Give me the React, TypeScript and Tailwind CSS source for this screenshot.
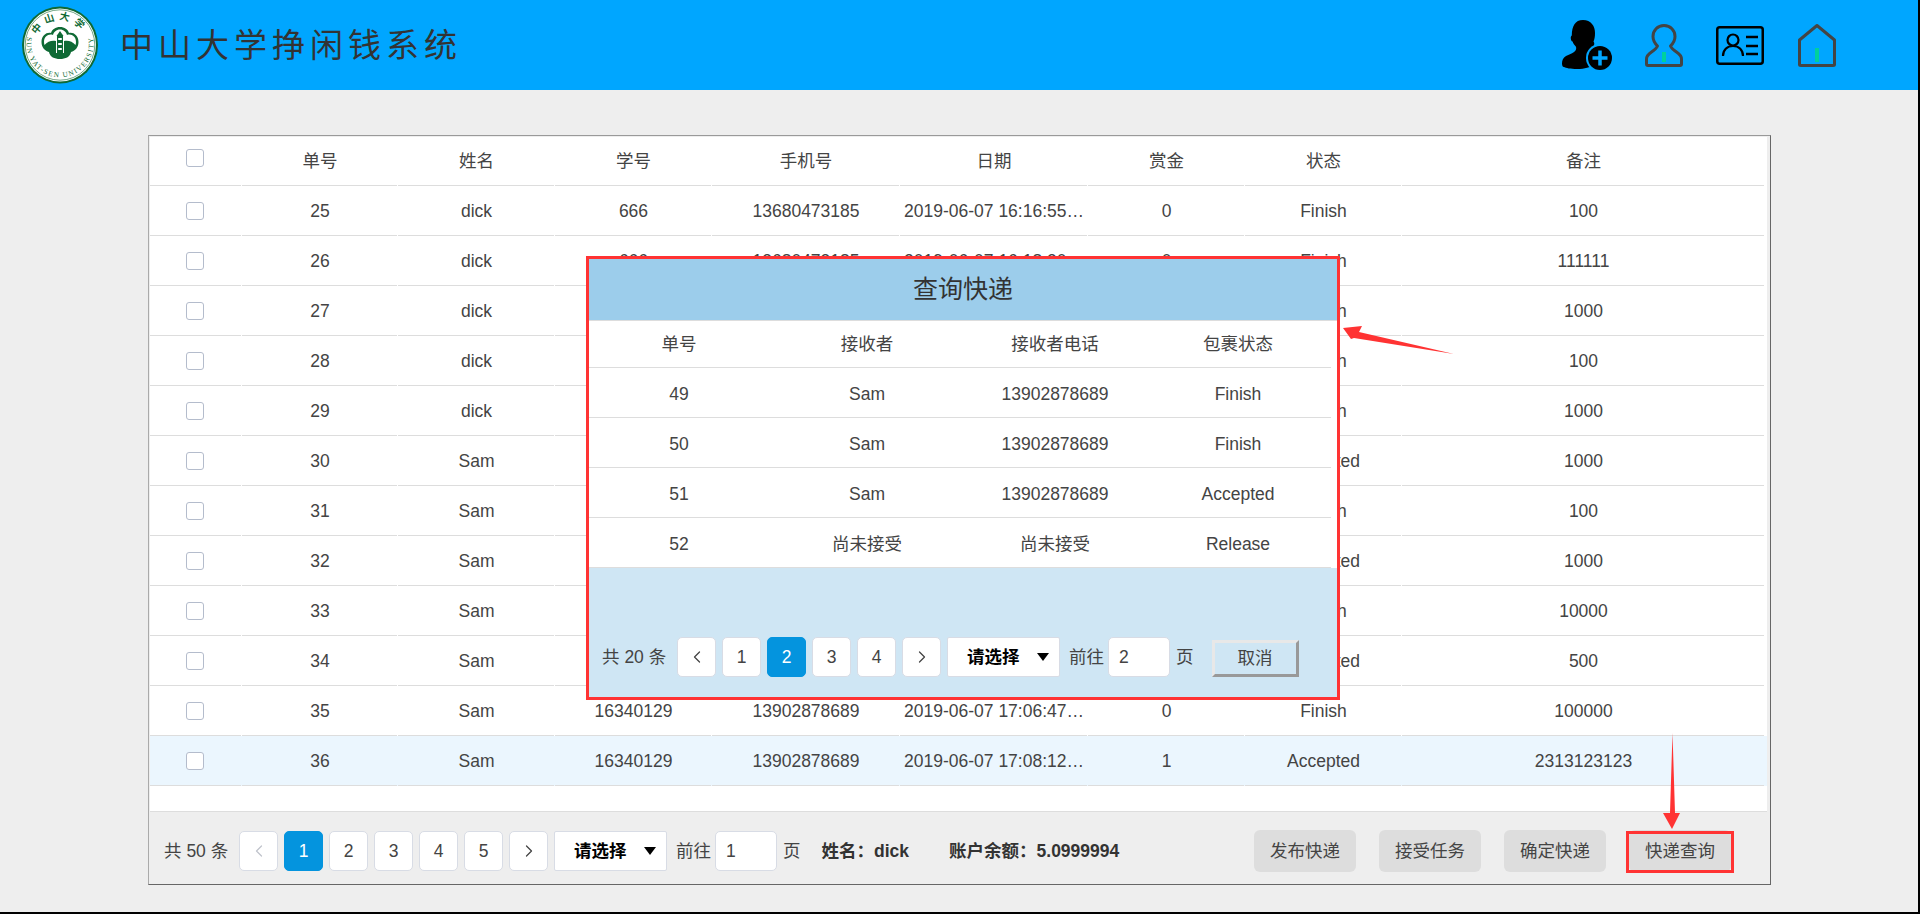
import React from "react";
import { ChevronLeft, ChevronRight } from "lucide-react";

const font = "font-['Liberation_Sans','Noto_Sans_CJK_SC',sans-serif]";

const rows = [
  ["25", "dick", "666", "13680473185", "2019-06-07 16:16:55…", "0", "Finish", "100"],
  ["26", "dick", "666", "13680473185", "2019-06-07 16:18:30…", "0", "Finish", "111111"],
  ["27", "dick", "666", "13680473185", "2019-06-07 16:20:11…", "0", "Finish", "1000"],
  ["28", "dick", "666", "13680473185", "2019-06-07 16:25:42…", "0", "Finish", "100"],
  ["29", "dick", "666", "13680473185", "2019-06-07 16:30:08…", "0", "Finish", "1000"],
  ["30", "Sam", "16340129", "13902878689", "2019-06-07 16:41:26…", "1", "Accepted", "1000"],
  ["31", "Sam", "16340129", "13902878689", "2019-06-07 16:45:33…", "0", "Finish", "100"],
  ["32", "Sam", "16340129", "13902878689", "2019-06-07 16:50:19…", "1", "Accepted", "1000"],
  ["33", "Sam", "16340129", "13902878689", "2019-06-07 16:55:02…", "0", "Finish", "10000"],
  ["34", "Sam", "16340129", "13902878689", "2019-06-07 17:01:37…", "1", "Accepted", "500"],
  ["35", "Sam", "16340129", "13902878689", "2019-06-07 17:06:47…", "0", "Finish", "100000"],
  ["36", "Sam", "16340129", "13902878689", "2019-06-07 17:08:12…", "1", "Accepted", "2313123123"],
];

const parcels = [
  ["49", "Sam", "13902878689", "Finish"],
  ["50", "Sam", "13902878689", "Finish"],
  ["51", "Sam", "13902878689", "Accepted"],
  ["52", "尚未接受", "尚未接受", "Release"],
];

const headers = ["单号", "姓名", "学号", "手机号", "日期", "赏金", "状态", "备注"];

const tableCols = "grid grid-cols-[92px_156px_157px_157px_188px_188px_157px_157px_363px] text-center";
const parcelCols = "grid grid-cols-[180px_196px_180px_1fr]";

function Checkbox() {
  return <span className="block w-[18px] h-[18px] bg-white border border-[#b4bccc] rounded-[3px]" />;
}

function Logo() {
  return (
    <svg width="78" height="78" viewBox="0 0 78 78" className="shrink-0">
      <defs>
        <path id="logoTop" d="M14 39 A25 25 0 0 1 64 39" />
        <path id="logoBottom" d="M7 28 A33.500 33.500 0 1 0 71 28" />
      </defs>
      <ellipse cx="39" cy="39" rx="38" ry="38.500" fill="#0f6a35" />
      <ellipse cx="39" cy="39" rx="36" ry="36.500" fill="#fff" />
      <ellipse cx="39" cy="39" rx="34.800" ry="35.200" fill="none" stroke="#0f6a35" strokeWidth="0.600" />
      <text fontSize="10" fontWeight="700" fill="#0f6a35" fontFamily="'Noto Sans CJK SC',sans-serif" letterSpacing="4">
        <textPath href="#logoTop" startOffset="10">中山大学</textPath>
      </text>
      <text fontSize="7.200" fill="#0f6a35" fontFamily="'Liberation Serif',serif">
        <textPath href="#logoBottom" startOffset="3" textLength="118">SUN YAT-SEN UNIVERSITY</textPath>
      </text>
      <path d="M39 21c4.500 0 8 2.500 9 6 4.500-1 9.500 2.500 9.500 9 0 5.500-3.500 9-7.500 10-1 5-5.500 7-11 7s-10-2-11-7c-4-1-7.500-4.500-7.500-10 0-6.500 5-10 9.500-9 1-3.500 4.500-6 9-6z" fill="#0f6a35" />
      <path d="M39 23.500c3.500 0 6.500 2.500 7 5.500 4.500-1.500 9 1.500 9 7 0 1-.2 2-.5 3-3-4-8-5-11.500-4v12h-8V35c-3.500-1-8.500 0-11.500 4-.3-1-.5-2-.5-3 0-5.500 4.500-8.500 9-7 .5-3 3.500-5.500 7-5.500z" fill="#fff" />
      <path d="M36 30h6v19h-6z" fill="#0f6a35" />
      <path d="M37.200 32h3.600v2h-3.600zM37.200 37h3.600v2h-3.600zM37.200 42h3.600v2h-3.600z" fill="#fff" />
      <path d="M39 25l3.500 5h-7z" fill="#0f6a35" />
    </svg>
  );
}

function HeaderIcons() {
  return (
    <div className="flex items-center">
      <svg width="50" height="50" viewBox="0 0 50 50">
        <path d="M21 0c8 0 12 6 12 13 0 4-.5 6-1.500 8.500 1 1 1 3 .2 4.500-1 1.500-2 2.500-2.500 4.500-.3 1.500 0 3 1 4.500-1 3-.7 7 1 10.500-3 1.500-8 3.500-16 3.500-7 0-11-1-13.500-2C1 47 0 46 0 43.500c0-3 1-6 4-7.500 5-2.500 8-3 9.500-5.500 1-1.500.8-3 .3-4-1.500-1.500-2.500-3-3.200-5-1.200 0-1.600-1.500-1.800-3-.2-1.500.2-2.500 1-3C10 6 13 0 21 0z" fill="#000" />
        <circle cx="38" cy="38" r="14" fill="#00a6ff" />
        <circle cx="38" cy="38" r="12" fill="#000" />
        <path d="M38 30.500v15M30.500 38h15" stroke="#00a6ff" strokeWidth="3.500" />
      </svg>
      <svg width="38" height="43" viewBox="0 0 38 43" className="ml-[33px]" fill="none">
        <path d="M19 1.500c6.500 0 11 5 11 11 0 4-2 7-4.500 9.500 1 2.500 3 4 6 6 3 2 5 4 5 7v5c0 1-.5 1.500-1.500 1.500H3c-1 0-1.500-.5-1.500-1.500v-5c0-3 2-5 5-7 3-2 5-3.500 6-6C10 19.500 8 16.500 8 12.500c0-6 4.500-11 11-11z" stroke="#444" strokeWidth="3" strokeLinejoin="round" />
        <path d="M17 28h4v10h-4z" fill="#00d09c" />
      </svg>
      <svg width="48" height="39" viewBox="0 0 48 39" className="ml-[33px]" fill="none">
        <rect x="1.250" y="1.250" width="45.500" height="36.500" rx="2.500" stroke="#000" strokeWidth="2.500" />
        <circle cx="17" cy="14" r="5.500" stroke="#000" strokeWidth="2.200" />
        <path d="M7 30c0-6 4-10 10-10s10 4 10 10" stroke="#000" strokeWidth="2.200" />
        <path d="M30 11h12M30 20h12M30 28h12" stroke="#000" strokeWidth="2.500" />
      </svg>
      <svg width="38" height="43" viewBox="0 0 38 43" className="ml-[34px]" fill="none">
        <path d="M19 1.500L36.500 16v24.500c0 1-.5 1-1.500 1H3c-1 0-1.500 0-1.500-1V16z" stroke="#444" strokeWidth="3" strokeLinejoin="round" />
        <path d="M17 24h4v14h-4z" fill="#00d09c" />
      </svg>
    </div>
  );
}

function PageBtn({ children, active = false }: { children: React.ReactNode; active?: boolean }) {
  return (
    <span
      className={`flex items-center justify-center w-[39px] h-[40px] rounded-[5px] border text-[17.500px] ${
        active ? "bg-[#0494de] border-[#0494de] text-white" : "bg-white border-[#d8dce5] text-[#444]"
      }`}
    >
      {children}
    </span>
  );
}

function Pager({ total, pages, current, prevOff }: { total: number; pages: number[]; current: number; prevOff?: boolean }) {
  return (
    <div className="flex items-center text-[17.500px] text-[#444]">
      <span className="w-[67px] mr-[8px] whitespace-nowrap">共 {total} 条</span>
      <div className="flex items-center gap-[6px]">
        <PageBtn>
          <ChevronLeft size={20} strokeWidth={1.500} className={prevOff ? "text-[#c0c4cc]" : "text-[#444]"} />
        </PageBtn>
        {pages.map((p) => (
          <PageBtn key={p} active={p === current}>
            {p}
          </PageBtn>
        ))}
        <PageBtn>
          <ChevronRight size={20} strokeWidth={1.500} />
        </PageBtn>
        <span className="flex items-center w-[113px] h-[40px] pl-[19px] bg-white border border-[#d8dce5] rounded-[2px] font-bold text-black">
          请选择
          <span className="ml-[17px] border-x-[6px] border-t-[8px] border-x-transparent border-t-black" />
        </span>
      </div>
      <span className="ml-[9px] mr-[4px]">前往</span>
      <input
        readOnly
        value={current}
        className="w-[62px] h-[40px] pl-[10px] bg-white border border-[#d8dce5] rounded-[5px] text-[#444] outline-none"
      />
      <span className="ml-[6px]">页</span>
    </div>
  );
}

function ActionBtn({ label, marked }: { label: string; marked?: boolean }) {
  return (
    <span className="relative flex items-center justify-center w-[102px] h-[42px] rounded-[6px] bg-[#ddd] text-[17.500px] text-[#444]">
      {label}
      {marked && <span className="absolute top-px -left-[3px] -right-[3px] -bottom-px border-[3px] border-[#f33]" />}
    </span>
  );
}

function ParcelDialog() {
  return (
    <div className="absolute left-[586px] top-[256px] w-[754px] h-[444px] flex flex-col border-[3px] border-[#f33] bg-white text-[17.500px] text-[#444]">
      <div className="h-[62px] shrink-0 flex items-center justify-center bg-[#9ccdeb] border-b border-[#ddd] text-[25px] text-[#333]">
        查询快递
      </div>
      <div className="w-[742px] text-center">
        <div className={`${parcelCols} h-[47px] pt-px items-center border-b border-[#ddd]`}>
          <span>单号</span>
          <span>接收者</span>
          <span>接收者电话</span>
          <span>包裹状态</span>
        </div>
        {parcels.map((row) => (
          <div key={row[0]} className={`${parcelCols} h-[50px] pt-[4px] items-center border-b border-[#ddd]`}>
            {row.map((v, i) => (
              <span key={i}>{v}</span>
            ))}
          </div>
        ))}
      </div>
      <div className="flex-1 flex items-end pl-[13px] pb-[20px] bg-[#cfe6f4]">
        <Pager total={20} pages={[1, 2, 3, 4]} current={2} />
        <button className="ml-[18px] w-[87px] h-[37px] border-[3px] border-t-[#e8e8e8] border-l-[#e8e8e8] border-r-[#999] border-b-[#999] bg-[#cfe6f4] text-[17.500px] text-[#444]">
          取消
        </button>
      </div>
    </div>
  );
}

export default function App() {
  return (
    <div className={`h-screen bg-black overflow-hidden ${font}`}>
      <div className="relative w-[1918px] h-[912px] bg-[#eee]">
        <header className="h-[90px] flex items-center justify-between pl-[21px] pr-[82px] bg-[#00a6ff]">
          <div className="flex items-center">
            <Logo />
            <span className="ml-[21px] -mt-[2px] text-[33px] tracking-[5px] text-[#333] font-['Noto_Sans_CJK_SC',sans-serif]">
              中山大学挣闲钱系统
            </span>
          </div>
          <HeaderIcons />
        </header>

        <main className="pt-[45px] pl-[148px]">
          <div className="w-[1623px] h-[750px] flex flex-col border border-t-[#999] border-l-[#aaa] border-r-[#666] border-b-[#666] pt-px pl-px pr-[3px]">
            <div className="h-[675px] shrink-0 bg-white border-b border-[#ddd] text-[17.500px] text-[#444]">
              <div className={tableCols}>
                <div className="h-[49px] pb-[7px] pr-[2px] mr-px flex items-center justify-center border-b border-[#ddd]">
                  <Checkbox />
                </div>
                {headers.map((h) => (
                  <div key={h} className="h-[49px] pl-px mr-px flex items-center justify-center border-b border-[#ddd]">
                    {h}
                  </div>
                ))}
              </div>
              {rows.map((row, r) => (
                <div key={row[0]} className={`${tableCols} ${r === rows.length - 1 ? "bg-[#ebf6fe]" : ""}`}>
                  <div className="h-[50px] pr-[2px] mr-px flex items-center justify-center border-b border-[#ddd]">
                    <Checkbox />
                  </div>
                  {row.map((v, i) => (
                    <div
                      key={i}
                      className="h-[50px] pt-[2px] pl-px mr-px flex items-center justify-center whitespace-nowrap border-b border-[#ddd]"
                    >
                      {v}
                    </div>
                  ))}
                </div>
              ))}
            </div>
            <footer className="flex-1 flex items-center pt-[6px] pl-[14px] pr-[36px]">
              <Pager total={50} pages={[1, 2, 3, 4, 5]} current={1} prevOff />
              <span className="ml-[21px] text-[17.500px] font-bold text-[#333]">姓名：dick</span>
              <span className="ml-[40px] text-[17.500px] font-bold text-[#333]">账户余额：5.0999994</span>
              <div className="ml-auto flex gap-[23px]">
                <ActionBtn label="发布快递" />
                <ActionBtn label="接受任务" />
                <ActionBtn label="确定快递" />
                <ActionBtn label="快递查询" marked />
              </div>
            </footer>
          </div>
        </main>

        <ParcelDialog />

        {/* red annotation arrows */}
        <svg className="absolute left-[1340px] top-[320px]" width="120" height="40" viewBox="0 0 120 40">
          <path d="M3 8L22 6L19 12L114 34L14 18L11 19z" fill="#f33" />
        </svg>
        <svg className="absolute left-[1660px] top-[733px]" width="24" height="98" viewBox="0 0 24 98">
          <path d="M12.500 0L15 80H20L12 96L3 80H10z" fill="#f33" />
        </svg>
      </div>
    </div>
  );
}
